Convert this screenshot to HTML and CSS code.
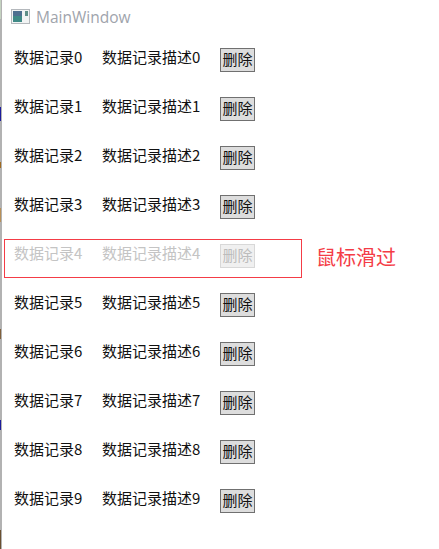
FILE: index.html
```html
<!DOCTYPE html>
<html>
	<head>
		<meta charset="utf-8">
		<title>MainWindow</title>
		<link rel="stylesheet" href="styles.css">
	</head>
	<body>
		<div class="ventana">
			<div class="tituloBarra">
				<svg class="tituloIcono" width="20" height="16" viewBox="0 0 20 16">
					<rect x="0.5" y="0.5" width="18" height="14" fill="#f2f4f4" stroke="#b4b8bc"/>
					<rect x="2" y="2" width="9" height="11" fill="#3f8a86"/>
					<rect x="2" y="2" width="9" height="5" fill="#4d6f8f"/>
					<rect x="14" y="2" width="3" height="5" fill="#5f8f88"/>
				</svg>
				<span class="tituloTexto">MainWindow</span>
			</div>
			<div class="lista">
				<div class="fila"><span class="colNombre">数据记录0</span><span class="colDesc">数据记录描述0</span><button class="botonBorrar">删除</button></div>
				<div class="fila"><span class="colNombre">数据记录1</span><span class="colDesc">数据记录描述1</span><button class="botonBorrar">删除</button></div>
				<div class="fila"><span class="colNombre">数据记录2</span><span class="colDesc">数据记录描述2</span><button class="botonBorrar">删除</button></div>
				<div class="fila"><span class="colNombre">数据记录3</span><span class="colDesc">数据记录描述3</span><button class="botonBorrar">删除</button></div>
				<div class="fila filaHover">
					<span class="colNombre">数据记录4</span><span class="colDesc">数据记录描述4</span><button class="botonBorrar">删除</button>
					<div class="marcoHover"></div>
					<span class="notaHover">鼠标滑过</span>
				</div>
				<div class="fila"><span class="colNombre">数据记录5</span><span class="colDesc">数据记录描述5</span><button class="botonBorrar">删除</button></div>
				<div class="fila"><span class="colNombre">数据记录6</span><span class="colDesc">数据记录描述6</span><button class="botonBorrar">删除</button></div>
				<div class="fila"><span class="colNombre">数据记录7</span><span class="colDesc">数据记录描述7</span><button class="botonBorrar">删除</button></div>
				<div class="fila"><span class="colNombre">数据记录8</span><span class="colDesc">数据记录描述8</span><button class="botonBorrar">删除</button></div>
				<div class="fila"><span class="colNombre">数据记录9</span><span class="colDesc">数据记录描述9</span><button class="botonBorrar">删除</button></div>
			</div>
		</div>
	</body>
</html>
```

FILE: styles.css
```css
html, body {
	height: 100%;
}
body {
	margin: 0;
	background: #fff;
	font-family: "Noto Sans CJK SC", "Noto Sans", sans-serif;
	color: #111;
	overflow: hidden;
}
.ventana {
	height: 100%;
	box-sizing: border-box;
	padding-left: 1px;
	box-shadow: inset 1px 0 #b2b2b2;
	border-left: 1px solid #b2b2b2;
	border-image: linear-gradient(to bottom,
		#c4d2c0 0, #c4d2c0 20px, #b2b2b2 20px,
		#b2b2b2 108px, #1c1c9c 108px, #1c1c9c 122px, #b2b2b2 122px,
		#b2b2b2 162px, #a06a20 162px, #a06a20 168px, #b2b2b2 168px,
		#b2b2b2 208px, #b89058 208px, #b89058 222px, #b2b2b2 222px,
		#b2b2b2 329px, #80603c 329px, #80603c 339px, #b2b2b2 339px,
		#b2b2b2 419px, #1c1c9c 419px, #1c1c9c 429px, #b2b2b2 429px,
		#b2b2b2 529px, #6a5030 529px) 1;
}
.tituloBarra {
	display: flex;
	align-items: center;
	height: 33px;
	padding-left: 9px;
}
.tituloIcono {
	margin-right: 5px;
}
.tituloTexto {
	font-family: "Open Sans", "Noto Sans", sans-serif;
	font-size: 15.5px;
	color: #a0a4ac;
}
.lista {
	padding-left: 12px;
}
.fila {
	position: relative;
	display: flex;
	align-items: center;
	height: 49px;
	font-size: 15px;
	line-height: 22px;
}
.colNombre {
	width: 88px;
	padding-bottom: 1px;
}
.colDesc {
	width: 118px;
	padding-bottom: 1px;
}
.botonBorrar {
	box-sizing: border-box;
	width: 35px;
	height: 24px;
	margin-top: 5px;
	padding: 0 0 2px;
	border: 1px solid #707070;
	background: #ddd;
	color: #111;
	font-family: inherit;
	font-size: 15px;
	line-height: 20px;
}
.filaHover .colNombre, .filaHover .colDesc {
	color: #c4c4c4;
}
.filaHover .botonBorrar {
	border-color: #d8d8d8;
	background: #f0f0f0;
	color: #bcbcbc;
}
.marcoHover {
	position: absolute;
	left: -10px;
	top: 10px;
	width: 298px;
	height: 39px;
	box-sizing: border-box;
	border: 1px solid #f43c46;
}
.notaHover {
	position: absolute;
	left: 302px;
	top: 14px;
	font-size: 20px;
	line-height: 28px;
	color: #f43c46;
}
```
